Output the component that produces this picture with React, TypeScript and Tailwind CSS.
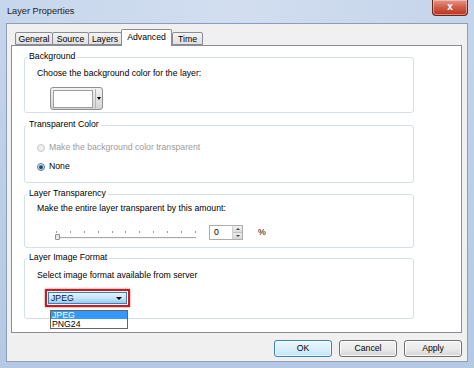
import React from "react";

type GroupProps = {
    title: string;
    className: string;
    children?: React.ReactNode;
};

// Windows 7 style group box: the caption sits on the top border line
function Group({ title, className, children }: GroupProps) {
    return (
        <div className={`w-[390px] border border-[#d5dfe5] rounded-[3px] flex flex-col ${className}`}>
            <div className="-mt-[7px] ml-[2px] h-[11px] flex">
                <span className="bg-white px-[2px] leading-[11px]">{title}</span>
            </div>
            {children}
        </div>
    );
}

function Tab({ label, width, active }: { label: string; width: string; active?: boolean }) {
    if (active) {
        return (
            <div
                className={`${width} h-[17px] bg-white border border-b-0 border-[#898c95] rounded-t-[2px] flex items-center justify-center leading-[11px] pb-[2px]`}
            >
                {label}
            </div>
        );
    }
    return (
        <div
            className={`${width} h-[13px] mb-[1px] -mr-px bg-gradient-to-b from-[#f4f4f4] to-[#e0e0e0] border border-[#898c95] rounded-t-[2px] flex items-center justify-center leading-[11px] pt-[1px]`}
        >
            {label}
        </div>
    );
}

function Button({ label, focused }: { label: string; focused?: boolean }) {
    return (
        <div
            className={`w-[58px] h-[17px] rounded-[3px] border flex items-center justify-center leading-[11px] ${
                focused
                    ? "border-[#3c7fb1] bg-gradient-to-b from-[#eaf6fd] via-[#d9f0fc] to-[#bee6fd] shadow-[inset_0_0_0_1px_rgba(255,255,255,0.7)]"
                    : "border-[#707070] bg-gradient-to-b from-[#f2f2f2] via-[#ebebeb] to-[#d5d5d5] shadow-[inset_0_0_0_1px_rgba(255,255,255,0.8)]"
            }`}
        >
            {label}
        </div>
    );
}

export default function App() {
    const ticks = Array.from({ length: 11 });

    return (
        <div className="w-[474px] h-[368px] overflow-hidden flex flex-col bg-gradient-to-b from-[#c4d5ec] to-[#b5c9e4] text-[8.7px] text-black font-['Liberation_Sans',Arial,sans-serif]">
            {/* Title bar */}
            <div className="relative h-[23px] shrink-0 flex items-center pl-[7px] bg-gradient-to-r from-[#c6d6ec] via-[#d2def0] to-[#c4d4ea]">
                <span className="text-[9.2px] leading-[11px] text-[#1e1e1e] pb-[1px]">Layer Properties</span>
                <div className="absolute top-0 right-[6px] w-[36px] h-[16px] rounded-b-[4px] border border-t-0 border-[#6d2419] bg-gradient-to-b from-[#e3978a] via-[#cf5b47] to-[#b8321e] flex items-center justify-center shadow-[inset_0_0_0_1px_rgba(255,220,210,0.5)]">
                    <span className="text-white font-bold text-[10px] leading-[10px] -mt-[1px]">x</span>
                </div>
            </div>

            {/* Dialog body */}
            <div className="ml-[6px] w-[462px] h-[339px] shrink-0 bg-[#f0f0f0] border border-[#8d9fb8] flex flex-col">
                {/* Tabs */}
                <div className="relative z-10 mt-[5px] ml-[8px] h-[17px] flex items-end">
                    <Tab label="General" width="w-[38px]" />
                    <Tab label="Source" width="w-[37px]" />
                    <Tab label="Layers" width="w-[34px]" />
                    <Tab label="Advanced" width="w-[51px]" active />
                    <Tab label="Time" width="w-[31px]" />
                </div>

                {/* Tab panel */}
                <div className="-mt-px ml-[4px] w-[451px] h-[288px] bg-white border border-[#898c95] flex flex-col pl-[12px] pt-[11px]">
                    <Group title="Background" className="h-[56px]">
                        <div className="mt-[6px] ml-[12px] leading-[11px]">Choose the background color for the layer:</div>
                        <div className="mt-[8px] ml-[25px] w-[53px] h-[23px] rounded-[3px] border border-[#8e8f8f] bg-gradient-to-b from-[#f2f2f2] to-[#d4d4d4] flex items-center pl-[2px] pr-[1px]">
                            <div className="w-[40px] h-[18px] bg-white border border-[#a0a0a0]" />
                            <div className="ml-[2px] w-px h-[19px] bg-[#b5b5b5]" />
                            <div className="flex-1 flex items-center justify-center">
                                <div className="w-0 h-0 border-l-[2px] border-r-[2px] border-t-[3px] border-l-transparent border-r-transparent border-t-black" />
                            </div>
                        </div>
                    </Group>

                    <Group title="Transparent Color" className="mt-[12px] h-[58px]">
                        <div className="mt-[12px] ml-[12px] flex items-center leading-[11px]">
                            <div className="w-[8px] h-[8px] rounded-full border border-[#c8c8c8] bg-[#f0f0f0]" />
                            <span className="ml-[4px] text-[#9c9c9c]">Make the background color transparent</span>
                        </div>
                        <div className="mt-[8px] ml-[12px] flex items-center leading-[11px]">
                            <div className="w-[8px] h-[8px] rounded-full border border-[#5a7d9a] bg-gradient-to-b from-[#e8f2fa] to-[#b8d2e6] flex items-center justify-center">
                                <div className="w-[4px] h-[4px] rounded-full bg-gradient-to-b from-[#3a6f9a] to-[#0f3050]" />
                            </div>
                            <span className="ml-[4px]">None</span>
                        </div>
                    </Group>

                    <Group title="Layer Transparency" className="mt-[11px] h-[54px]">
                        <div className="mt-[4px] ml-[12px] leading-[11px]">Make the entire layer transparent by this amount:</div>
                        <div className="mt-[11px] ml-[28px] flex items-start">
                            <div className="relative w-[146px] h-[15px] flex flex-col pt-[6px] px-[3px]">
                                <div className="h-[2px] flex justify-between">
                                    {ticks.map((_, i) => (
                                        <div key={i} className="w-px h-[2px] bg-[#9a9a9a]" />
                                    ))}
                                </div>
                                <div className="mt-[4px] h-[2px] border-t border-[#a8a8a8] border-b border-b-[#f4f4f4]" />
                                <div className="absolute left-[2px] top-[9px] w-[5px] h-[6px] rounded-[1px] border border-[#8e8f8f] bg-[#e8e8e8]" />
                            </div>
                            <div className="ml-[10px] w-[34px] h-[15px] border border-[#abadb3] bg-white flex">
                                <div className="flex-1 pl-[4px] flex items-center leading-[11px]">0</div>
                                <div className="w-[10px] flex flex-col border-l border-[#d0d0d0]">
                                    <div className="flex-1 bg-gradient-to-b from-[#f2f2f2] to-[#dcdcdc] border-b border-[#c0c0c0] flex items-center justify-center">
                                        <div className="w-0 h-0 border-l-[2px] border-r-[2px] border-b-[2px] border-l-transparent border-r-transparent border-b-[#444]" />
                                    </div>
                                    <div className="flex-1 bg-gradient-to-b from-[#ececec] to-[#d6d6d6] flex items-center justify-center">
                                        <div className="w-0 h-0 border-l-[2px] border-r-[2px] border-t-[2px] border-l-transparent border-r-transparent border-t-[#444]" />
                                    </div>
                                </div>
                            </div>
                            <div className="ml-[15px] h-[15px] flex items-center leading-[11px]">%</div>
                        </div>
                    </Group>

                    <Group title="Layer Image Format" className="mt-[10px] h-[61px]">
                        <div className="mt-[7px] ml-[12px] leading-[11px]">Select image format available from server</div>
                        <div className="relative mt-[8px] ml-[20px] w-[85px] h-[18px] border-2 border-[#d0181f] shadow-[0_0_2px_rgba(120,0,0,0.6)] p-px">
                            <div className="h-full border border-[#3c7fb1] bg-gradient-to-b from-[#e4f3fc] via-[#c5e5f9] to-[#98cdf0] flex items-center pl-[2px] pr-[4px]">
                                <span className="flex-1 leading-[11px] text-[#0a1a33]">JPEG</span>
                                <div className="w-0 h-0 border-l-[3px] border-r-[3px] border-t-[3px] border-l-transparent border-r-transparent border-t-black" />
                            </div>
                            {/* open drop-down list */}
                            <div className="absolute left-[3px] top-[19px] w-[78px] h-[19px] border border-[#646464] bg-white flex flex-col">
                                <div className="h-[8px] bg-[#3399ff] text-white leading-[8px] pl-[1px]">JPEG</div>
                                <div className="h-[9px] leading-[10px] pl-[1px]">PNG24</div>
                            </div>
                        </div>
                    </Group>
                </div>

                {/* Buttons */}
                <div className="mt-[7px] pr-[5px] flex justify-end gap-[7px]">
                    <Button label="OK" focused />
                    <Button label="Cancel" />
                    <Button label="Apply" />
                </div>
            </div>
        </div>
    );
}
